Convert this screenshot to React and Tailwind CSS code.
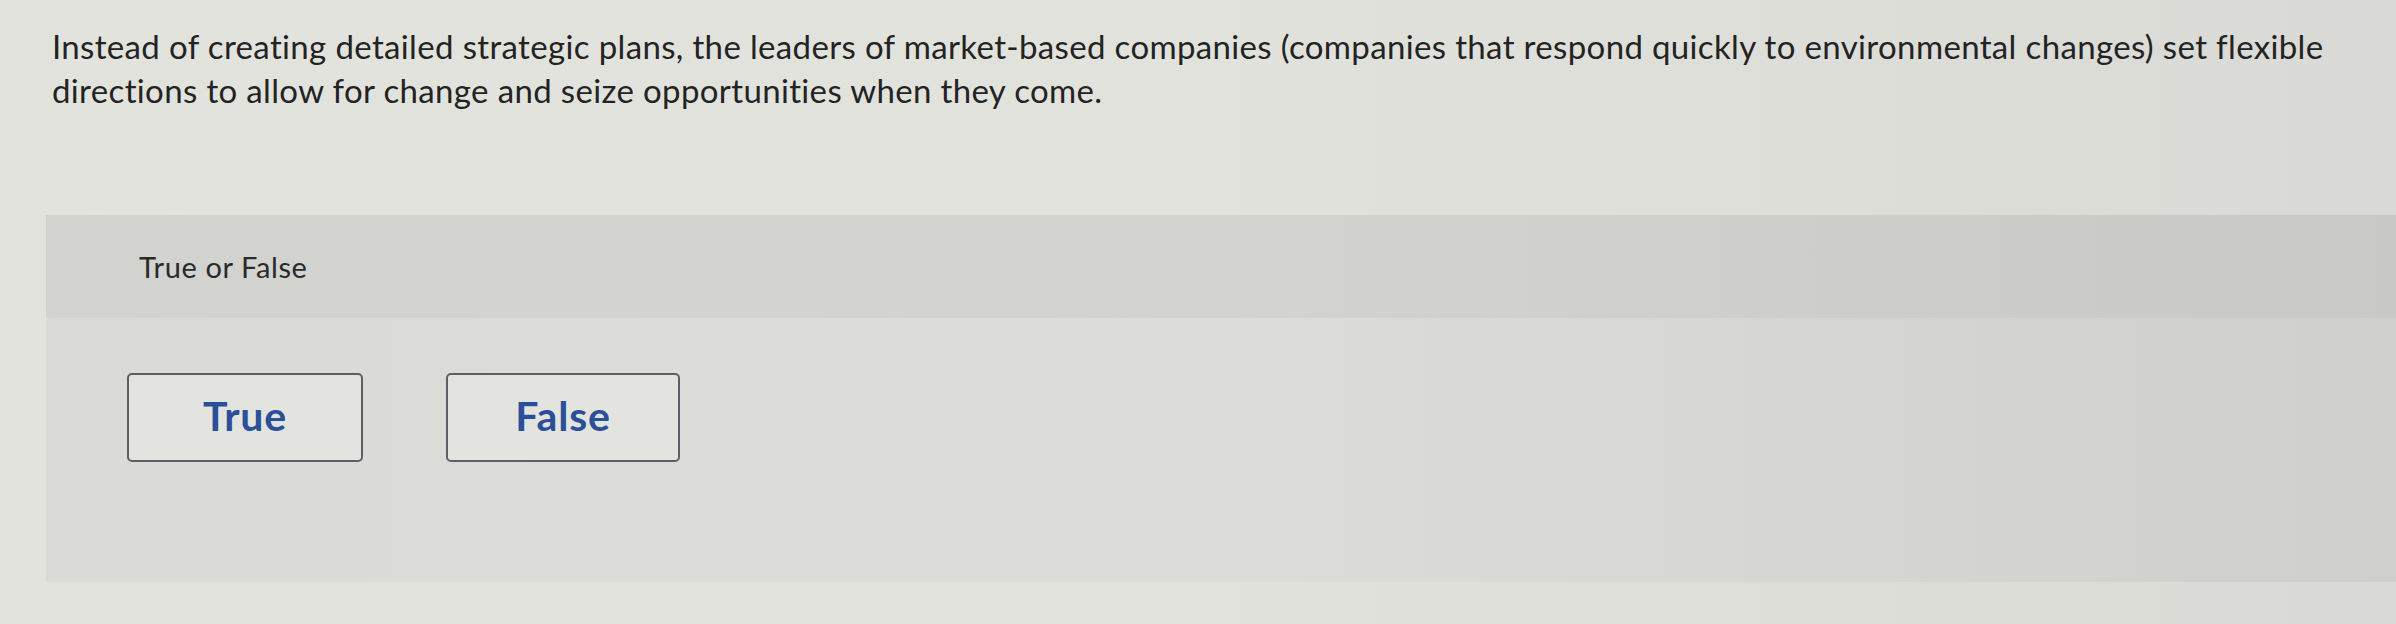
const FONT = "font-['Lato','Open_Sans',sans-serif]";

// Single true/false answer button
function Choice({ label, width }) {
  return (
    <button
      className={`${width} h-[89px] flex items-center justify-center pb-[3px] rounded-[5px] border-2 border-[#5b5f69] bg-[#e3e3df] text-[41px] font-bold tracking-[0.8px] text-[#2b4f98] ${FONT}`}
    >
      {label}
    </button>
  );
}

export default function App() {
  return (
    <div className={`w-[2396px] h-[624px] overflow-hidden bg-gradient-to-r from-[#e3e3de] via-[#e2e2dd] to-[#d9d9d5] ${FONT}`}>
      {/* question stem */}
      <p className="pl-[52px] pr-[30px] pt-[24px] text-[33px] leading-[44px] text-[#232323] tracking-[0.35px]">
        Instead of creating detailed strategic plans, the leaders of market-based companies (companies that respond quickly to environmental changes) set flexible directions to allow for change and seize opportunities when they come.
      </p>

      {/* answer panel */}
      <div className="ml-[46px] mt-[103px] h-[367px] flex flex-col">
        <div className="h-[103px] flex items-center pl-[93px] bg-gradient-to-r from-[#d2d2ce] via-[#d3d3cf] to-[#c8c8c5]">
          <span className="text-[29px] tracking-[0.6px] text-[#2a2a2a]">True or False</span>
        </div>
        <div className="flex-1 flex items-start gap-[83px] pl-[81px] pt-[55px] bg-gradient-to-r from-[#dadad6] via-[#dcdcd8] to-[#cfcfcb]">
          <Choice label="True" width="w-[236px]" />
          <Choice label="False" width="w-[234px]" />
        </div>
      </div>
    </div>
  );
}
